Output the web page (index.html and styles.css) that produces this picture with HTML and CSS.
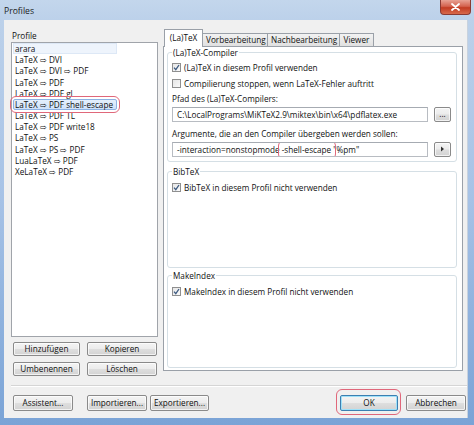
FILE: index.html
```html
<!DOCTYPE html>
<html>
<head>
<meta charset="utf-8">
<link rel="stylesheet" href="styles.css">
</head>
<body>
<div class="window">
  <div class="titlebar">
    <span class="title">Profiles</span>
    <div class="close"><svg width="9" height="8" viewBox="0 0 9 8"><path d="M1 1 L8 7 M8 1 L1 7" stroke="#fff" stroke-width="1.8" stroke-linecap="round"/></svg></div>
  </div>
  <div class="client">
    <div class="main">
      <div class="left">
        <div class="label">Profile</div>
        <ul class="list">
          <li class="item hover">arara</li>
          <li class="item">LaTeX ⇨ DVI</li>
          <li class="item">LaTeX ⇨ DVI ⇨ PDF</li>
          <li class="item">LaTeX ⇨ PDF</li>
          <li class="item">LaTeX ⇨ PDF gl</li>
          <li class="item selected">LaTeX ⇨ PDF shell-escape</li>
          <li class="item">LaTeX ⇨ PDF TL</li>
          <li class="item">LaTeX ⇨ PDF write18</li>
          <li class="item">LaTeX ⇨ PS</li>
          <li class="item">LaTeX ⇨ PS ⇨ PDF</li>
          <li class="item">LuaLaTeX ⇨ PDF</li>
          <li class="item">XeLaTeX ⇨ PDF</li>
        </ul>
        <div class="btn-grid">
          <button class="btn">Hinzufügen</button>
          <button class="btn">Kopieren</button>
          <button class="btn">Umbenennen</button>
          <button class="btn">Löschen</button>
        </div>
      </div>
      <div class="tabs">
        <div class="tabbar">
          <div class="tab active">(La)TeX</div>
          <div class="tab">Vorbearbeitung</div>
          <div class="tab">Nachbearbeitung</div>
          <div class="tab">Viewer</div>
        </div>
        <div class="pane">
          <fieldset class="group g1">
            <legend>(La)TeX-Compiler</legend>
            <div class="check"><span class="box checked"><svg width="7" height="7" viewBox="0 0 7 7"><path d="M1 3.6 L2.8 5.6 L6 1" fill="none" stroke="#3d5a80" stroke-width="1.3"/></svg></span>(La)TeX in diesem Profil verwenden</div>
            <div class="check c2"><span class="box"></span>Compilierung stoppen, wenn LaTeX-Fehler auftritt</div>
            <div class="flabel">Pfad des (La)TeX-Compilers:</div>
            <div class="field-row">
              <div class="input">C:\LocalPrograms\MiKTeX2.9\miktex\bin\x64\pdflatex.exe</div>
              <button class="btn small">...</button>
            </div>
            <div class="flabel l2">Argumente, die an den Compiler übergeben werden sollen:</div>
            <div class="field-row">
              <div class="input">-interaction=nonstopmode <span class="mark">-shell-escape</span> "%pm"</div>
              <button class="btn small"><svg width="5" height="6" viewBox="0 0 5 6"><path d="M1 0.5 L4 3 L1 5.5 Z" fill="#333"/></svg></button>
            </div>
          </fieldset>
          <fieldset class="group g2">
            <legend>BibTeX</legend>
            <div class="check"><span class="box checked"><svg width="7" height="7" viewBox="0 0 7 7"><path d="M1 3.6 L2.8 5.6 L6 1" fill="none" stroke="#3d5a80" stroke-width="1.3"/></svg></span>BibTeX in diesem Profil nicht verwenden</div>
          </fieldset>
          <fieldset class="group g3">
            <legend>MakeIndex</legend>
            <div class="check"><span class="box checked"><svg width="7" height="7" viewBox="0 0 7 7"><path d="M1 3.6 L2.8 5.6 L6 1" fill="none" stroke="#3d5a80" stroke-width="1.3"/></svg></span>MakeIndex in diesem Profil nicht verwenden</div>
          </fieldset>
        </div>
      </div>
    </div>
    <div class="bottom">
      <button class="btn b-assist">Assistent...</button>
      <button class="btn b-imp">Importieren...</button>
      <button class="btn b-exp">Exportieren...</button>
      <span class="spacer"></span>
      <button class="btn b-ok">OK</button>
      <button class="btn b-cancel">Abbrechen</button>
    </div>
  </div>
</div>
</body>
</html>
```
FILE: styles.css
```css
html, body {
  margin: 0;
  padding: 0;
}
body {
  width: 474px;
  height: 425px;
  overflow: hidden;
  font-family: "Open Sans", "Noto Sans", sans-serif;
  font-size: 8.2px;
  color: #111;
}
.window {
  width: 474px;
  height: 425px;
  box-sizing: border-box;
  display: flex;
  flex-direction: column;
  padding: 0 6px 7px 4px;
  background: linear-gradient(to bottom, #c3d6ec 0px, #bcd1ea 20px, #a6c2e6 200px, #7aa3d6 425px);
}
.titlebar {
  height: 20px;
  display: flex;
  align-items: center;
}
.title {
  font-size: 8.6px;
  color: #1a1a1a;
  margin-top: 1px;
}
.close {
  margin-left: auto;
  margin-right: -3px;
  align-self: flex-start;
  width: 31px;
  height: 15px;
  box-sizing: border-box;
  border: 1px solid #8a3a33;
  border-top: none;
  border-radius: 0 0 4px 4px;
  background: linear-gradient(to bottom, #e8a294 0%, #d4634f 45%, #c23c23 55%, #d86a4c 100%);
  display: flex;
  align-items: center;
  justify-content: center;
}
.client {
  flex: 1;
  background: #f0f0f0;
  display: flex;
  flex-direction: column;
  padding: 10px 0 0 7px;
  border-right: 1px solid #c8d2de;
}
.main {
  display: flex;
  height: 346px;
}
.left {
  width: 147px;
  display: flex;
  flex-direction: column;
}
.label {
  height: 12px;
  line-height: 11px;
  padding-left: 1px;
}
.list {
  height: 296px;
  box-sizing: border-box;
  margin: 0;
  padding: 0;
  list-style: none;
  border: 1px solid #a0a4aa;
  background: #fff;
}
.item {
  height: 11.2px;
  line-height: 11.2px;
  width: 104px;
  box-sizing: border-box;
  padding-left: 2px;
  margin-left: 1px;
  white-space: nowrap;
}
.item.hover {
  background: #eef4fc;
  border: 1px solid #dde8f6;
  line-height: 9.2px;
  padding-left: 1px;
  margin-top: 0;
}
.item.selected {
  background: linear-gradient(to bottom, #e4effc, #cfe2fa);
  border: 1px solid #8db2e3;
  border-radius: 2px;
  line-height: 9.2px;
  padding-left: 1px;
  position: relative;
}
.item.selected::after {
  content: "";
  position: absolute;
  left: -4px;
  top: -4px;
  right: -4px;
  bottom: -4px;
  border: 1.5px solid #e0677a;
  border-radius: 6px;
}
.btn-grid {
  margin-top: 5px;
  padding-left: 2px;
  display: grid;
  grid-template-columns: 67px 70px;
  column-gap: 7px;
  row-gap: 6px;
}
.btn {
  font-family: inherit;
  font-size: 8.2px;
  color: #111;
  height: 14px;
  padding: 0;
  margin: 0;
  box-sizing: border-box;
  border: 1px solid #8a8a8a;
  border-radius: 2px;
  background: linear-gradient(to bottom, #f4f4f4 0%, #ececec 48%, #dedede 52%, #d3d3d3 100%);
  box-shadow: inset 0 0 0 1px rgba(255,255,255,0.7);
  line-height: 12px;
  text-align: center;
}
.tabs {
  margin-left: 5px;
  margin-top: -1px;
  width: 300px;
  height: 342px;
  display: flex;
  flex-direction: column;
}
.tabbar {
  height: 17px;
  display: flex;
  align-items: flex-end;
  padding-left: 1px;
  position: relative;
  z-index: 1;
}
.tab {
  height: 13px;
  box-sizing: border-box;
  border: 1px solid #9aa0a8;
  border-bottom: none;
  border-left: none;
  background: linear-gradient(to bottom, #f2f2f2, #e0e0e0);
  padding: 0 3px;
  line-height: 12px;
  margin-bottom: 0;
}
.tab:nth-child(2) { width: 65px; text-align: center; border-left: none; }
.tab:nth-child(3) { width: 72px; text-align: center; }
.tab:nth-child(4) { width: 34px; text-align: center; }
.tab.active {
  width: 39px;
  height: 18px;
  margin-bottom: -1px;
  background: #fff;
  border-left: 1px solid #9aa0a8;
  line-height: 16px;
  text-align: center;
}
.pane {
  flex: 1;
  border: 1px solid #9aa0a8;
  background: #fff;
  padding: 0 5px 0 3px;
  display: flex;
  flex-direction: column;
}
.group {
  margin: 0;
  padding: 0 0 0 4px;
  border: 1px solid #d5dfe5;
  border-radius: 3px;
  box-sizing: border-box;
  min-width: 0;
}
.group legend {
  padding: 0 1px;
  margin-left: 0;
  line-height: 11px;
  height: 11px;
}
.g1 { height: 115px; margin-top: 0; }
.g2 { height: 102px; margin-top: 4px; }
.g3 { height: 98px; margin-top: 2px; }
.check {
  display: flex;
  align-items: center;
  height: 11px;
  line-height: 11px;
  margin-top: 4px;
}
.check.c2 { margin-top: 5px; }
.g2 .check, .g3 .check { margin-top: 5px; }
.box {
  width: 9px;
  height: 9px;
  box-sizing: border-box;
  border: 1px solid #8f8f8f;
  background: linear-gradient(135deg, #e6e6e6, #fafafa);
  margin-right: 3px;
  display: flex;
  align-items: center;
  justify-content: center;
  flex-shrink: 0;
}
.flabel {
  height: 11px;
  line-height: 11px;
  margin-top: 4px;
}
.flabel.l2 { margin-top: 6px; }
.field-row {
  display: flex;
  align-items: center;
  margin-top: 2px;
  height: 16px;
}
.input {
  width: 256px;
  height: 15px;
  box-sizing: border-box;
  border: 1px solid #b8bcc2;
  border-top-color: #a6abb2;
  background: #fff;
  line-height: 13px;
  padding-left: 4px;
  white-space: nowrap;
  overflow: hidden;
}
.mark {
  position: relative;
}
.mark::after {
  content: "";
  position: absolute;
  left: -4px;
  right: -5px;
  top: -4px;
  bottom: -5px;
  border: 1.5px solid #e0677a;
  border-radius: 6px;
}
.btn.small {
  width: 17px;
  height: 15px;
  margin-left: 6px;
  display: flex;
  align-items: center;
  justify-content: center;
  line-height: 10px;
}
.bottom {
  margin-top: 9px;
  border-top: 1px solid #d5d5d5;
  box-shadow: inset 0 1px 0 #fff;
  padding: 9px 0 0 2px;
  display: flex;
}
.bottom .btn { height: 16px; line-height: 14px; }
.b-assist { width: 60px; }
.b-imp { width: 60px; margin-left: 14px; }
.b-exp { width: 59px; margin-left: 3px; }
.spacer { flex: 1; }
.b-ok {
  width: 58px;
  position: relative;
  border-color: #3c7fb1;
  box-shadow: inset 0 0 0 1px #9fe1f9;
}
.b-ok::after {
  content: "";
  position: absolute;
  left: -5px;
  right: -4px;
  top: -7px;
  bottom: -5px;
  border: 1.5px solid #e0677a;
  border-radius: 6px;
}
.b-cancel { width: 60px; margin-left: 8px; margin-right: 1px; }
```
